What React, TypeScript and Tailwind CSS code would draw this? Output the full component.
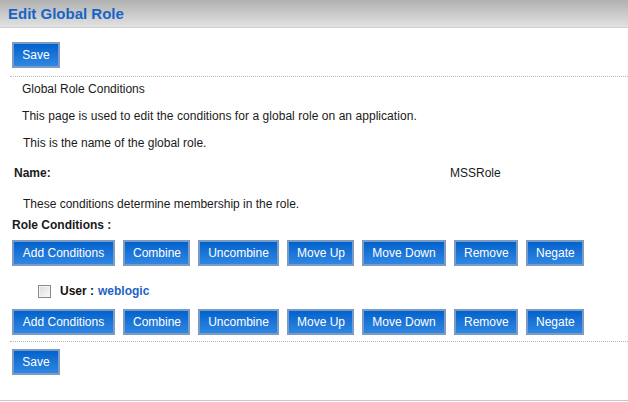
import React from 'react';

const font = { fontFamily: '"Liberation Sans", Arial, sans-serif' };

const actions: { label: string; w: string }[] = [
  { label: 'Add Conditions', w: 'w-[103px]' },
  { label: 'Combine', w: 'w-[67px]' },
  { label: 'Uncombine', w: 'w-[81px]' },
  { label: 'Move Up', w: 'w-[67px]' },
  { label: 'Move Down', w: 'w-[84px]' },
  { label: 'Remove', w: 'w-[64px]' },
  { label: 'Negate', w: 'w-[58px]' },
];

const BlueButton = ({ label, w = '' }: { label: string; w?: string }) => (
  <button
    type="button"
    className={`${w} h-[26px] px-[8px] border-2 border-[#7b9ac4] bg-gradient-to-b from-[#0062cc] to-[#2f87e2] text-white text-[12px] leading-none whitespace-nowrap`}
  >
    {label}
  </button>
);

const ActionRow = () => (
  <div className="flex gap-2 pl-[12px]">
    {actions.map((a) => (
      <BlueButton key={a.label} label={a.label} w={a.w} />
    ))}
  </div>
);

const App = () => {
  return (
    <div className="w-[628px] h-[402px] bg-white text-[12px] leading-[14px] text-[#1a1a1a] overflow-hidden" style={font}>
      {/* Header */}
      <div className="h-[28px] bg-gradient-to-b from-[#b1b1b1] to-[#e2e2e2] border-b border-[#d0d0d0] flex items-center pl-[8px]">
        <h1 className="text-[15px] font-bold text-[#1764c6]">Edit Global Role</h1>
      </div>

      {/* Top save */}
      <div className="pl-[12px] pt-[14px]">
        <BlueButton label="Save" w="w-[48px]" />
      </div>

      <div className="ml-[10px] mt-[8px] border-t border-dotted border-[#b8b8b8]" />

      <div className="pl-[22px] pt-[5px]">Global Role Conditions</div>
      <div className="pl-[22px] pt-[13px] tracking-[0.05px]">This page is used to edit the conditions for a global role on an application.</div>
      <div className="pl-[23px] pt-[13px]">This is the name of the global role.</div>

      <div className="flex pt-[16px]">
        <span className="pl-[14px] w-[450px] font-bold">Name:</span>
        <span>MSSRole</span>
      </div>

      <div className="pl-[23px] pt-[17px]">These conditions determine membership in the role.</div>
      <div className="pl-[12px] pt-[7px] font-bold">Role Conditions :</div>

      <div className="pt-[8px]">
        <ActionRow />
      </div>

      {/* Condition */}
      <div className="flex items-center pl-[38px] pt-[16px] h-[34px]">
        <span className="w-[13px] h-[13px] border border-[#8a8a8a] bg-gradient-to-br from-[#dcdcdc] to-[#fafafa] shadow-[inset_0_0_0_1px_#f4f4f4]" />
        <span className="ml-[9px] font-bold text-[#111]">User :</span>
        <span className="ml-[4px] font-bold text-[#1e63c4]">weblogic</span>
      </div>

      <div className="pt-[9px]">
        <ActionRow />
      </div>

      <div className="ml-[10px] mt-[6px] border-t border-dotted border-[#b8b8b8]" />

      <div className="pl-[12px] pt-[7px]">
        <BlueButton label="Save" w="w-[48px]" />
      </div>

      <div className="mt-[25px] border-t border-[#c8c8c8]" />
    </div>
  );
};

export default App;
